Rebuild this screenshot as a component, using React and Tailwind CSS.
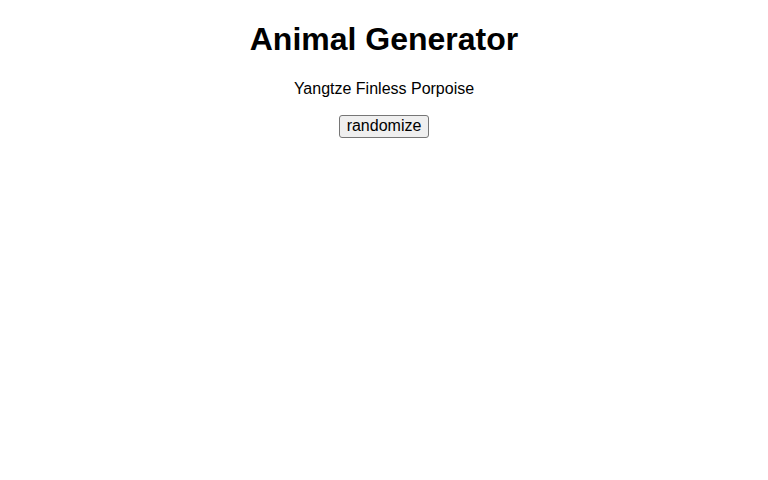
import React, { useState } from 'react';

const animals = [
  'Yangtze Finless Porpoise',
  'Red Panda',
  'Snow Leopard',
  'Axolotl',
  'Pangolin',
];

export default function App() {
  const [animal, setAnimal] = useState(animals[0]);

  const randomize = () => {
    setAnimal(animals[Math.floor(Math.random() * animals.length)]);
  };

  return (
    <div className="text-center text-black bg-white min-h-screen font-['Liberation_Sans',Arial,sans-serif]">
      <h1 className="text-[32px] leading-[1.15] font-bold pt-[21px] mb-[22px]">Animal Generator</h1>
      <p className="text-base leading-[1.15] mb-4">{animal}</p>
      <button
        onClick={randomize}
        className="text-base leading-[1.15] px-[7px] py-[1px] border border-[#767676] rounded-[3px] bg-[#efefef] hover:bg-[#e5e5e5]"
      >
        randomize
      </button>
    </div>
  );
}
